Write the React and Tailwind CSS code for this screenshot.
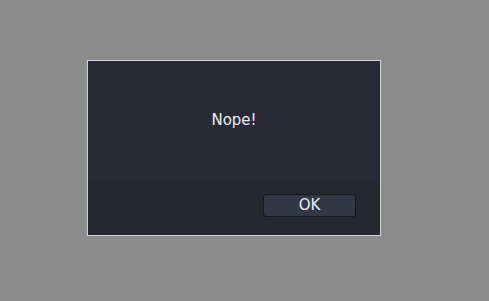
import React from 'react';

const App = () => {
    return (
        <div className="w-[489px] h-[301px] bg-[#8c8c8c] pt-[60px] pl-[87px]" style={{ fontFamily: '"DejaVu Sans", sans-serif' }}>
            <div className="w-[294px] h-[176px] border border-[#d4d4d4] bg-[#282b36] flex flex-col">
                {/* message */}
                <div className="h-[121px] flex items-center justify-center pb-[2px]">
                    <p className="text-[15px] text-[#e8edf5]">Nope!</p>
                </div>
                {/* buttons */}
                <div className="flex-1 bg-[#252831] flex justify-end items-start pt-[12px] pr-[24px]">
                    <button className="w-[93px] h-[23px] rounded-[3px] bg-[#333745] border border-[#15171c] text-[15px] text-[#e8edf5] leading-none">
                        OK
                    </button>
                </div>
            </div>
        </div>
    );
};

export default App;
